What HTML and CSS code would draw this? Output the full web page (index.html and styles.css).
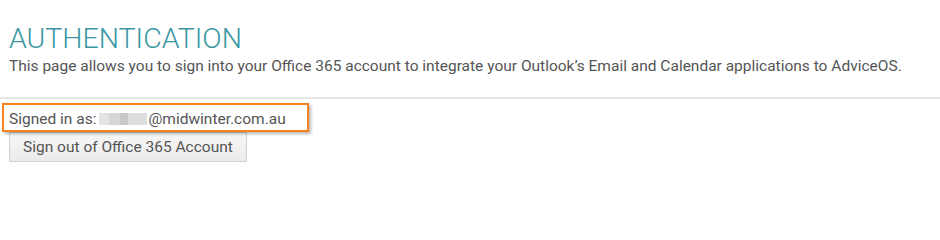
FILE: index.html
```html
<!DOCTYPE html>
<html>
<head>
<meta charset="utf-8">
<link rel="stylesheet" href="styles.css">
</head>
<body>
<div class="page">
  <header class="intro">
    <h1 class="title">AUTHENTICATION</h1>
    <p class="desc">This page allows you to sign into your Office 365 account to integrate your Outlook’s Email and Calendar applications to AdviceOS.</p>
  </header>
  <hr class="divider">
  <section class="account">
    <div class="signed">Signed in as: <span class="blur"><i class="b1"></i><i class="b2"></i><i class="b3"></i><i class="b4"></i></span>@midwinter.com.au</div>
    <button class="btn">Sign out of Office 365 Account</button>
    <div class="highlight"></div>
  </section>
</div>
</body>
</html>
```
FILE: styles.css
```css
html, body { margin: 0; padding: 0; background: #fff; }
body { font-family: Roboto, "Liberation Sans", sans-serif; color: #555; }
.page { position: relative; }
.intro { padding: 23px 9px 0; }
.title { margin: 0; font-weight: 300; font-size: 28.5px; line-height: 31px; color: #3a97a3; letter-spacing: 0; }
.desc { margin: 2px 0 0; font-size: 15.5px; line-height: 20px; color: #555; }
.divider { margin: 21px 0 0; border: 0; height: 2px; background: #e6e6e6; }
.account { position: relative; padding: 10px 9px 0; }
.signed { font-size: 15.5px; line-height: 20px; color: #555; display: flex; align-items: center; }
.blur { display: inline-flex; width: 48px; height: 12px; margin: 0 1px 0 3px; }
.blur i { display: block; height: 100%; }
.blur .b1 { width: 10px; background: #e4e4e4; }
.blur .b2 { width: 11px; background: #d6d6d6; }
.blur .b3 { width: 8px; background: #c8c8c8; }
.blur .b4 { width: 19px; background: #dedede; }
.btn { display: block; margin-top: 3px; height: 30px; padding: 0 13px; font-family: Roboto, "Liberation Sans", sans-serif; font-size: 15.5px; color: #555; background: linear-gradient(#f7f7f7, #ebebeb); border: 1px solid #cfcfcf; border-radius: 1px; }
.highlight { position: absolute; left: 2px; top: 4px; width: 303px; height: 25px; border: 2px solid #f7801f; box-shadow: 2px 2px 3px rgba(0,0,0,0.28); pointer-events: none; }
```
